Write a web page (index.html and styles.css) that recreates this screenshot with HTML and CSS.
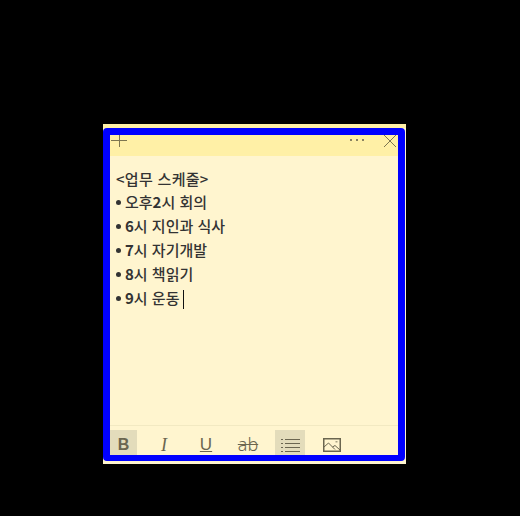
FILE: index.html
```html
<!DOCTYPE html>
<html lang="ko">
<head>
  <meta charset="UTF-8">
  <meta name="viewport" content="width=device-width, initial-scale=1.0">
  <title>스티커 메모</title>
  <link rel="stylesheet" href="styles.css">
</head>
<body>
  <div class="note">
    <div class="frame">
      <div class="note-header">
        <svg class="icon-plus" width="16" height="13" viewBox="0 0 16 13">
          <path d="M0 5.5H16M8.5 0V12" stroke="#7d7650" fill="none"/>
        </svg>
        <div class="header-right">
          <svg class="icon-more" width="15" height="3" viewBox="0 0 15 3">
            <path d="M0 0h2v2H0zM6 0h2v2H6zM12 0h2v2h-2z" fill="#8a8360"/>
          </svg>
          <svg class="icon-close" width="14" height="12" viewBox="0 0 14 12">
            <path d="M1 0L13 12M13 0L1 12" stroke="#7d7650" fill="none"/>
          </svg>
        </div>
      </div>
      <div class="note-body">
        <div class="line line-title">&lt;업무 스케줄&gt;</div>
        <div class="line line-second"><span class="dot"></span>오후<b>2</b>시 회의</div>
        <div class="line"><span class="dot"></span><b>6</b>시 지인과 식사</div>
        <div class="line"><span class="dot"></span><b>7</b>시 자기개발</div>
        <div class="line"><span class="dot"></span><b>8</b>시 책읽기</div>
        <div class="line"><span class="dot"></span><b>9</b>시 운동<span class="caret"></span></div>
      </div>
      <div class="toolbar">
        <div class="tool tool-first active"><span class="t-bold">B</span></div>
        <div class="tool"><span class="t-italic">I</span></div>
        <div class="tool"><span class="t-under">U</span></div>
        <div class="tool"><span class="t-strike">ab</span></div>
        <div class="tool active">
          <svg width="19" height="13" viewBox="0 0 19 13">
            <path d="M0 .5h2M4 .5h15M0 4.5h2M4 4.5h15M0 8.5h2M4 8.5h15M0 12.5h2M4 12.5h15" stroke="#6b6650" fill="none"/>
          </svg>
        </div>
        <div class="tool">
          <svg width="18" height="14" viewBox="0 0 18 14">
            <rect x="0.75" y="0.75" width="16.5" height="12.5" stroke="#6b6650" stroke-width="1.5" fill="none"/>
            <path d="M1 9L5.5 5L12 11.5M9.5 9L12 7.5L17 12" stroke="#6b6650" fill="none"/>
            <path d="M12.5 3h2v1.5h-2z" fill="#a8a284"/>
          </svg>
        </div>
      </div>
    </div>
  </div>
</body>
</html>
```

FILE: styles.css
```css
body {
  margin: 0;
  height: 516px;
  background: #000;
  font-family: 'Noto Sans CJK KR', 'Noto Sans', sans-serif;
  overflow: hidden;
}
.note {
  width: 303px;
  height: 340px;
  margin: 124px 0 0 103px;
  padding: 0 1px 3px 0;
  box-sizing: border-box;
  border-top: 4px solid #fff0a6;
  background: #fff5cf;
}
.frame {
  height: 100%;
  border: 7px solid #0000ff;
  border-bottom-width: 6px;
  border-radius: 4px;
  box-sizing: border-box;
  display: flex;
  flex-direction: column;
  overflow: hidden;
  background: #fff5cf;
}
.note-header {
  height: 21px;
  flex: none;
  display: flex;
  justify-content: space-between;
  background: #fff0a6;
}
.icon-plus {
  margin-left: 1px;
}
.header-right {
  display: flex;
  align-items: flex-start;
}
.icon-more {
  margin-top: 4px;
  margin-right: 18px;
}
.icon-close {
  margin-right: 1px;
}
.note-body {
  flex: 1;
  padding: 11px 6px 0;
  color: #333;
  font-size: 15px;
  font-weight: 500;
  line-height: 24px;
}
.line {
  height: 24px;
  white-space: nowrap;
}
.line-title {
  letter-spacing: 0.3px;
}
.line-second {
  margin-top: -1px;
}
.line b {
  font-weight: 700;
}
.dot {
  display: inline-block;
  width: 5px;
  height: 5px;
  margin-right: 4px;
  border-radius: 50%;
  background: #333;
  vertical-align: 3px;
}
.caret {
  display: inline-block;
  width: 1px;
  height: 19px;
  margin-left: 4px;
  background: #111;
  vertical-align: middle;
}
.toolbar {
  height: 30px;
  flex: none;
  box-sizing: border-box;
  padding-top: 4px;
  border-top: 1px solid #f2e9c2;
  display: flex;
  gap: 12px;
}
.tool {
  width: 30px;
  height: 30px;
  flex: none;
  display: flex;
  align-items: center;
  justify-content: center;
  color: #6b6650;
  font-size: 16px;
  line-height: 1;
}
.tool-first {
  width: 27px;
}
.active {
  background: #e3dcbb;
}
.t-bold {
  font-family: 'Liberation Sans', sans-serif;
  font-weight: 700;
}
.t-italic {
  font-family: 'Liberation Serif', serif;
  font-style: italic;
  font-size: 18px;
}
.t-under {
  margin-bottom: 2px;
  font-family: 'Liberation Sans', sans-serif;
  font-size: 17px;
  text-decoration: underline;
  text-decoration-thickness: 1px;
  text-underline-offset: 1px;
}
.t-strike {
  margin-bottom: 2px;
  font-family: 'Noto Sans', sans-serif;
  font-weight: 300;
  font-size: 18px;
  text-decoration: line-through;
  text-decoration-thickness: 1px;
}
```
